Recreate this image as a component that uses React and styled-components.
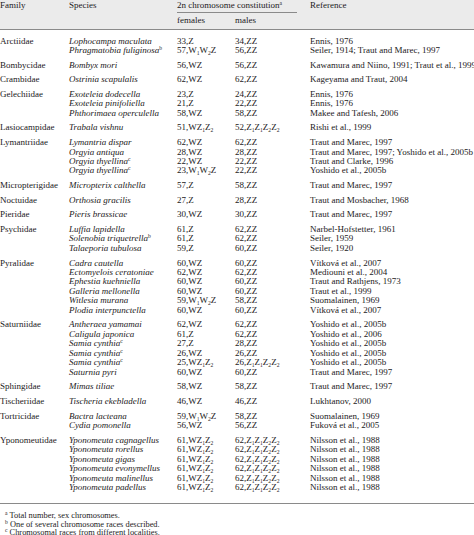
import React from "react";
import styled, { createGlobalStyle } from "styled-components";

const GlobalStyle = createGlobalStyle`
  html, body {
    margin: 0;
    padding: 0;
    background: #ffffff;
    overflow: hidden;
  }
  body {
    font-family: "Liberation Serif", "DejaVu Serif", serif;
    color: #1c1a1b;
  }
`;

const Page = styled.div`
  width: 474px;
  height: 535px;
  overflow: hidden;
`;

const Table = styled.table`
  border-collapse: collapse;
  border-spacing: 0;
  table-layout: fixed;
  width: 520px;
  font-size: 9px;
  border-bottom: 1px solid #8a8a8a;
`;

const Head = styled.thead`
  background: #ebebeb;
  border-bottom: 1px solid #8a8a8a;
`;

const HeadCell = styled.th`
  font-weight: normal;
  text-align: left;
  vertical-align: top;
  padding: ${(p) => (p.$sub ? "2px 0 4px 0" : "0")};
  line-height: 10px;
  white-space: nowrap;
`;

const GroupRule = styled.div`
  border-bottom: 1px solid #8a8a8a;
  margin-right: 13px;
  padding-bottom: 2px;
`;

const Cell = styled.td`
  padding: ${(p) => (p.$first ? p.$gap : 0)}px 0 ${(p) => (p.$last ? 11 : 0)}px 0;
  line-height: 9.45px;
  white-space: nowrap;
  vertical-align: top;
  font-style: ${(p) => (p.$italic ? "italic" : "normal")};
`;

const Sub = styled.sub`
  font-size: 5.6px;
  line-height: 0;
  vertical-align: -1.5px;
`;

const Sup = styled.sup`
  font-size: 5.6px;
  line-height: 0;
  vertical-align: 3px;
  font-style: normal;
`;

const Notes = styled.div`
  padding: 8px 0 0 5px;
  font-size: 8.4px;
  line-height: 8.3px;
`;

const data = [
  ["Arctiidae", [
    ["Lophocampa maculata", "", "33,Z", "34,ZZ", "Ennis, 1976"],
    ["Phragmatobia fuliginosa", "b", "57,W_1W_2Z", "56,ZZ", "Seiler, 1914; Traut and Marec, 1997"],
  ]],
  ["Bombycidae", [
    ["Bombyx mori", "", "56,WZ", "56,ZZ", "Kawamura and Niino, 1991; Traut et al., 1999"],
  ]],
  ["Crambidae", [
    ["Ostrinia scapulalis", "", "62,WZ", "62,ZZ", "Kageyama and Traut, 2004"],
  ]],
  ["Gelechiidae", [
    ["Exoteleia dodecella", "", "23,Z", "24,ZZ", "Ennis, 1976"],
    ["Exoteleia pinifoliella", "", "21,Z", "22,ZZ", "Ennis, 1976"],
    ["Phthorimaea operculella", "", "58,WZ", "58,ZZ", "Makee and Tafesh, 2006"],
  ]],
  ["Lasiocampidae", [
    ["Trabala vishnu", "", "51,WZ_1Z_2", "52,Z_1Z_1Z_2Z_2", "Rishi et al., 1999"],
  ]],
  ["Lymantriidae", [
    ["Lymantria dispar", "", "62,WZ", "62,ZZ", "Traut and Marec, 1997"],
    ["Orgyia antiqua", "", "28,WZ", "28,ZZ", "Traut and Marec, 1997; Yoshido et al., 2005b"],
    ["Orgyia thyellina", "c", "22,WZ", "22,ZZ", "Traut and Clarke, 1996"],
    ["Orgyia thyellina", "c", "23,W_1W_2Z", "22,ZZ", "Yoshido et al., 2005b"],
  ]],
  ["Micropterigidae", [
    ["Micropterix calthella", "", "57,Z", "58,ZZ", "Traut and Marec, 1997"],
  ]],
  ["Noctuidae", [
    ["Orthosia gracilis", "", "27,Z", "28,ZZ", "Traut and Mosbacher, 1968"],
  ]],
  ["Pieridae", [
    ["Pieris brassicae", "", "30,WZ", "30,ZZ", "Traut and Marec, 1997"],
  ]],
  ["Psychidae", [
    ["Luffia lapidella", "", "61,Z", "62,ZZ", "Narbel-Hofstetter, 1961"],
    ["Solenobia triquetrella", "b", "61,Z", "62,ZZ", "Seiler, 1959"],
    ["Talaeporia tubulosa", "", "59,Z", "60,ZZ", "Seiler, 1920"],
  ]],
  ["Pyralidae", [
    ["Cadra cautella", "", "60,WZ", "60,ZZ", "Vítková et al., 2007"],
    ["Ectomyelois ceratoniae", "", "62,WZ", "62,ZZ", "Mediouni et al., 2004"],
    ["Ephestia kuehniella", "", "60,WZ", "60,ZZ", "Traut and Rathjens, 1973"],
    ["Galleria mellonella", "", "60,WZ", "60,ZZ", "Traut et al., 1999"],
    ["Witlesia murana", "", "59,W_1W_2Z", "58,ZZ", "Suomalainen, 1969"],
    ["Plodia interpunctella", "", "60,WZ", "60,ZZ", "Vítková et al., 2007"],
  ]],
  ["Saturniidae", [
    ["Antheraea yamamai", "", "62,WZ", "62,ZZ", "Yoshido et al., 2005b"],
    ["Caligula japonica", "", "61,Z", "62,ZZ", "Yoshido et al., 2006"],
    ["Samia cynthia", "c", "27,Z", "28,ZZ", "Yoshido et al., 2005b"],
    ["Samia cynthia", "c", "26,WZ", "26,ZZ", "Yoshido et al., 2005b"],
    ["Samia cynthia", "c", "25,WZ_1Z_2", "26,Z_1Z_1Z_2Z_2", "Yoshido et al., 2005b"],
    ["Saturnia pyri", "", "60,WZ", "60,ZZ", "Traut and Marec, 1997"],
  ]],
  ["Sphingidae", [
    ["Mimas tiliae", "", "58,WZ", "58,ZZ", "Traut and Marec, 1997"],
  ]],
  ["Tischeriidae", [
    ["Tischeria ekebladella", "", "46,WZ", "46,ZZ", "Lukhtanov, 2000"],
  ]],
  ["Tortricidae", [
    ["Bactra lacteana", "", "59,W_1W_2Z", "58,ZZ", "Suomalainen, 1969"],
    ["Cydia pomonella", "", "56,WZ", "56,ZZ", "Fuková et al., 2005"],
  ]],
  ["Yponomeutidae", [
    ["Yponomeuta cagnagellus", "", "61,WZ_1Z_2", "62,Z_1Z_1Z_2Z_2", "Nilsson et al., 1988"],
    ["Yponomeuta rorellus", "", "61,WZ_1Z_2", "62,Z_1Z_1Z_2Z_2", "Nilsson et al., 1988"],
    ["Yponomeuta gigas", "", "61,WZ_1Z_2", "62,Z_1Z_1Z_2Z_2", "Nilsson et al., 1988"],
    ["Yponomeuta evonymellus", "", "61,WZ_1Z_2", "62,Z_1Z_1Z_2Z_2", "Nilsson et al., 1988"],
    ["Yponomeuta malinellus", "", "61,WZ_1Z_2", "62,Z_1Z_1Z_2Z_2", "Nilsson et al., 1988"],
    ["Yponomeuta padellus", "", "61,WZ_1Z_2", "62,Z_1Z_1Z_2Z_2", "Nilsson et al., 1988"],
  ]],
];

// "57,W_1W_2Z" -> 57,W<sub>1</sub>W<sub>2</sub>Z
const Chromo = ({ text }) => (
  <>
    {text.split(/_(\d)/).map((part, i) =>
      i % 2 === 1 ? <Sub key={i}>{part}</Sub> : part
    )}
  </>
);

const App = () => {
  return (
    <Page>
      <GlobalStyle />
      <Table>
        <colgroup>
          <col style={{ width: "69px" }} />
          <col style={{ width: "108px" }} />
          <col style={{ width: "58px" }} />
          <col style={{ width: "75px" }} />
          <col />
        </colgroup>
        <Head>
          <tr>
            <HeadCell rowSpan={2}>Family</HeadCell>
            <HeadCell rowSpan={2}>Species</HeadCell>
            <HeadCell colSpan={2}>
              <GroupRule>
                2n chromosome constitution<Sup>a</Sup>
              </GroupRule>
            </HeadCell>
            <HeadCell rowSpan={2}>Reference</HeadCell>
          </tr>
          <tr>
            <HeadCell $sub>females</HeadCell>
            <HeadCell $sub>males</HeadCell>
          </tr>
        </Head>
        {data.map(([family, rows], g) => (
          <tbody key={family}>
            {rows.map(([species, mark, fem, male, ref], i) => {
              const first = i === 0;
              const last = g === data.length - 1 && i === rows.length - 1;
              const gap = g === 0 ? 6.5 : 5.2;
              return (
                <tr key={i}>
                  <Cell $first={first} $last={last} $gap={gap}>
                    {first ? family : ""}
                  </Cell>
                  <Cell $first={first} $last={last} $gap={gap} $italic>
                    {species}
                    {mark && <Sup>{mark}</Sup>}
                  </Cell>
                  <Cell $first={first} $last={last} $gap={gap}>
                    <Chromo text={fem} />
                  </Cell>
                  <Cell $first={first} $last={last} $gap={gap}>
                    <Chromo text={male} />
                  </Cell>
                  <Cell $first={first} $last={last} $gap={gap}>
                    {ref}
                  </Cell>
                </tr>
              );
            })}
          </tbody>
        ))}
      </Table>
      <Notes>
        <div>
          <Sup>a</Sup> Total number, sex chromosomes.
        </div>
        <div>
          <Sup>b</Sup> One of several chromosome races described.
        </div>
        <div>
          <Sup>c</Sup> Chromosomal races from different localities.
        </div>
      </Notes>
    </Page>
  );
};

export default App;
